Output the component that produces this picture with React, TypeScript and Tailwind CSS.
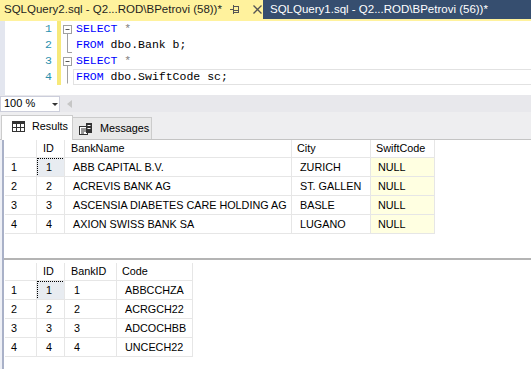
import React from "react";

type Col = { w: number; name: string; vpad?: number; hpad?: number; yellow?: boolean };

function Grid({ cols, rows }: { cols: Col[]; rows: string[][] }) {
  return (
    <div className="flex flex-col w-fit">
      <div className="flex h-[18px]">
        <div className="w-[32px] border-r border-b border-[#e6e6e6] shrink-0" />
        {cols.map((c, i) => (
          <div
            key={i}
            style={{ width: c.w, paddingLeft: c.hpad ?? 5 }}
            className="shrink-0 border-r border-b border-[#e6e6e6] flex items-center text-[10.8px] text-black leading-none whitespace-nowrap overflow-hidden"
          >
            {c.name}
          </div>
        ))}
      </div>
      {rows.map((r, ri) => (
        <div key={ri} className="flex h-[19px]">
          <div className="w-[32px] shrink-0 border-r border-b border-[#e6e6e6] flex items-center pl-[6px] text-[10.8px] leading-none">
            {ri + 1}
          </div>
          {r.map((v, ci) => {
            const c = cols[ci];
            const selected = ri === 0 && ci === 0;
            return (
              <div
                key={ci}
                style={{ width: c.w, paddingLeft: c.vpad ?? 7 }}
                className={
                  "shrink-0 border-r border-b border-[#e6e6e6] flex items-center text-[10.8px] leading-none relative whitespace-nowrap overflow-hidden " +
                  (c.yellow ? "bg-[#ffffe1]" : "") +
                  (selected ? " bg-[#e8ecf1]" : "")
                }
              >
                {selected && (
                  <div className="absolute left-0 top-0 right-[-1px] bottom-[-1px] border border-dotted border-black" />
                )}
                <span className="relative">{v}</span>
              </div>
            );
          })}
        </div>
      ))}
    </div>
  );
}

function ResultsIcon() {
  return (
    <svg width="13" height="11" viewBox="0 0 13 11" className="shrink-0">
      <rect x="0.5" y="0.5" width="12" height="10" fill="none" stroke="#333" />
      <rect x="0" y="0" width="13" height="3" fill="#333" />
      <line x1="4.5" y1="0" x2="4.5" y2="11" stroke="#333" />
      <line x1="8.5" y1="0" x2="8.5" y2="11" stroke="#333" />
      <line x1="0" y1="6.5" x2="13" y2="6.5" stroke="#333" />
    </svg>
  );
}

function MessagesIcon() {
  return (
    <svg width="13" height="12" viewBox="0 0 13 12" className="shrink-0">
      <rect x="0.5" y="3.5" width="8" height="8" fill="#fff" stroke="#333" />
      <line x1="2" y1="6" x2="7" y2="6" stroke="#333" />
      <line x1="2" y1="8" x2="7" y2="8" stroke="#333" />
      <line x1="2" y1="10" x2="5" y2="10" stroke="#333" />
      <rect x="7" y="0" width="6" height="10" fill="#333" />
      <rect x="8.5" y="2" width="3" height="1" fill="#fff" />
      <rect x="8.5" y="5" width="3" height="1" fill="#fff" />
    </svg>
  );
}

export default function App() {
  const mono = { fontFamily: '"Liberation Mono", "DejaVu Sans Mono", monospace' };
  const lines: React.ReactNode[] = [
    <>
      <span className="text-[#0000ff]">SELECT</span> <span className="text-[#808080]">*</span>
    </>,
    <>
      <span className="text-[#0000ff]">FROM</span> dbo.Bank b;
    </>,
    <>
      <span className="text-[#0000ff]">SELECT</span> <span className="text-[#808080]">*</span>
    </>,
    <>
      <span className="text-[#0000ff]">FROM</span> dbo.SwiftCode sc;
    </>,
  ];

  return (
    <div
      className="w-[531px] h-[369px] bg-white overflow-hidden flex flex-col text-black"
      style={{ fontFamily: '"Liberation Sans", Arial, sans-serif' }}
    >
      {/* Document tabs */}
      <div className="h-[19px] flex shrink-0">
        <div className="w-[263px] bg-[#fff29d] flex items-center pl-[4px] text-[11.5px] text-[#1e1e1e] whitespace-nowrap">
          <span>SQLQuery2.sql - Q2...ROD\BPetrovi (58))*</span>
          <svg width="10" height="9" viewBox="0 0 10 9" className="ml-[8px] shrink-0">
            <line x1="0" y1="4.5" x2="3" y2="4.5" stroke="#555" />
            <rect x="3.5" y="1.5" width="5" height="6" fill="none" stroke="#555" />
            <line x1="3.5" y1="0" x2="3.5" y2="9" stroke="#555" />
            <line x1="3.5" y1="5.5" x2="8.5" y2="5.5" stroke="#555" />
          </svg>
          <svg width="9" height="9" viewBox="0 0 9 9" className="ml-[13px] shrink-0">
            <path d="M0.5 0.5 L8.5 8.5 M8.5 0.5 L0.5 8.5" stroke="#555" strokeWidth="1.3" />
          </svg>
        </div>
        <div className="flex-1 bg-[#364e6f] flex items-center pl-[7px] text-[11.5px] text-white whitespace-nowrap">
          SQLQuery1.sql - Q2...ROD\BPetrovi (56))*
        </div>
      </div>
      <div className="h-[2px] bg-[#fff29d] shrink-0" />

      {/* Editor */}
      <div className="h-[74px] flex shrink-0">
        <div className="w-[5px] bg-[#e3e6ef] shrink-0" />
        <div className="w-[47px] shrink-0 flex flex-col items-end text-[11.5px] text-[#2b91af]" style={mono}>
          {[1, 2, 3, 4].map((n) => (
            <div key={n} className="h-[16px] leading-[16px]">
              {n}
            </div>
          ))}
        </div>
        <div className="w-[5px] shrink-0" />
        <div className="w-[4px] h-[64px] bg-[#f7e97a] shrink-0" />
        <div className="w-[12px] shrink-0 relative">
          <svg width="12" height="64" viewBox="0 0 12 64" className="absolute left-0 top-0">
            <rect x="2.5" y="4.5" width="8" height="8" fill="#fff" stroke="#a0a0a0" />
            <line x1="4.5" y1="8.5" x2="8.5" y2="8.5" stroke="#555" />
            <line x1="6.5" y1="13" x2="6.5" y2="31.5" stroke="#a0a0a0" />
            <line x1="6.5" y1="31.5" x2="11" y2="31.5" stroke="#a0a0a0" />
            <rect x="2.5" y="36.5" width="8" height="8" fill="#fff" stroke="#a0a0a0" />
            <line x1="4.5" y1="40.5" x2="8.5" y2="40.5" stroke="#555" />
            <line x1="6.5" y1="45" x2="6.5" y2="62.5" stroke="#a0a0a0" />
          </svg>
        </div>
        <div className="flex-1 flex flex-col text-[11.5px] whitespace-pre" style={mono}>
          {lines.map((l, i) => (
            <div
              key={i}
              className={
                "h-[16px] leading-[14px] pl-[2px] " +
                (i === 3 ? "border-t border-b border-l border-[#e2e2e2]" : "border border-transparent")
              }
            >
              {l}
            </div>
          ))}
        </div>
      </div>

      {/* Zoom bar */}
      <div className="h-[17px] bg-[#e8e8ec] flex items-center shrink-0">
        <div className="w-[60px] h-[16px] bg-white border border-[#cccedb] flex items-center pl-[3px] text-[11px] relative">
          100 %
          <svg width="6" height="4" viewBox="0 0 6 4" className="absolute left-[51px] top-[6px]">
            <path d="M0 0 L6 0 L3 3 Z" fill="#333" />
          </svg>
        </div>
        <svg width="5" height="8" viewBox="0 0 5 8" className="ml-[7px]">
          <path d="M5 0 L5 8 L0 4 Z" fill="#c6c6c6" />
        </svg>
      </div>

      {/* Results tabs */}
      <div className="h-[28px] bg-[#eeeef0] flex items-end pl-[1px] shrink-0 border-b border-[#c4c4c4]">
        <div className="w-[72px] h-[25px] bg-white border border-b-0 border-[#cccccc] flex items-center pl-[10px] gap-[7px] text-[10.8px] mb-[-1px] pb-[3px] whitespace-nowrap">
          <ResultsIcon />
          <span>Results</span>
        </div>
        <div className="w-[79px] h-[22px] bg-[#e9e9e9] border border-b-0 border-l-0 border-[#cccccc] flex items-center pl-[6px] gap-[8px] text-[10.8px] whitespace-nowrap">
          <MessagesIcon />
          <span>Messages</span>
        </div>
      </div>

      {/* Results pane */}
      <div className="flex-1 flex">
        <div className="w-[2px] bg-[#eef0f6] shrink-0" />
        <div className="w-[2px] bg-[#a9b1c8] shrink-0" />
        <div className="flex-1 flex flex-col pl-[1px]">
          <div className="h-[118px] shrink-0">
            <Grid
              cols={[
                { w: 28, name: "ID", hpad: 6, vpad: 9 },
                { w: 227, name: "BankName", hpad: 6, vpad: 8 },
                { w: 79, name: "City", hpad: 5, vpad: 8 },
                { w: 64, name: "SwiftCode", hpad: 5, vpad: 7, yellow: true },
              ]}
              rows={[
                ["1", "ABB CAPITAL B.V.", "ZURICH", "NULL"],
                ["2", "ACREVIS BANK AG", "ST. GALLEN", "NULL"],
                ["3", "ASCENSIA DIABETES CARE HOLDING AG", "BASLE", "NULL"],
                ["4", "AXION SWISS BANK SA", "LUGANO", "NULL"],
              ]}
            />
          </div>
          <div className="h-[2px] bg-[#b4b4b4] ml-[-1px] shrink-0" />
          <div className="pt-[3px]">
            <Grid
              cols={[
                { w: 28, name: "ID", hpad: 6, vpad: 9 },
                { w: 52, name: "BankID", hpad: 6, vpad: 9 },
                { w: 76, name: "Code", hpad: 5, vpad: 8 },
              ]}
              rows={[
                ["1", "1", "ABBCCHZA"],
                ["2", "2", "ACRGCH22"],
                ["3", "3", "ADCOCHBB"],
                ["4", "4", "UNCECH22"],
              ]}
            />
          </div>
        </div>
      </div>
    </div>
  );
}
